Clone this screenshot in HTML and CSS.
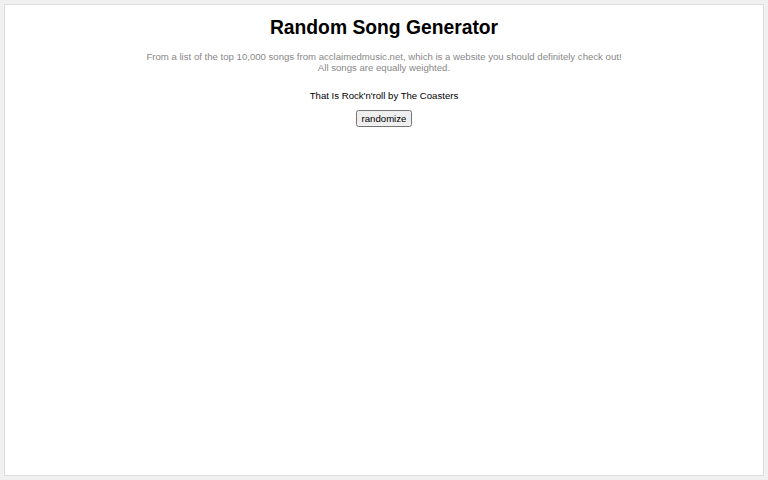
FILE: index.html
```html
<!DOCTYPE html>
<html lang="en">
<head>
    <meta charset="UTF-8">
    <meta name="viewport" content="width=device-width, initial-scale=1.0">
    <title>Random Song Generator</title>
    <link rel="stylesheet" href="styles.css">
</head>
<body>
    <main class="page">
        <h1>Random Song Generator</h1>
        <p class="intro">
            From a list of the top 10,000 songs from acclaimedmusic.net, which is a website you should definitely check out!<br>
            All songs are equally weighted.
        </p>
        <p id="song" class="song">That Is Rock'n'roll by The Coasters</p>
        <button id="randomize" type="button">randomize</button>
    </main>
</body>
</html>
```

FILE: styles.css
```css
html, body {
    height: 100%;
}
body {
    font-family: 'Liberation Sans', Arial, sans-serif;
    background-color: #f0f0f0;
    margin: 0;
    padding: 4px;
    box-sizing: border-box;
    color: #000;
}
.page {
    background-color: #fff;
    border: 1px solid #dcdcdc;
    height: 100%;
    box-sizing: border-box;
    text-align: center;
    padding-top: 12px;
}
h1 {
    font-size: 19.3px;
    line-height: 22px;
    margin: 0 0 12px;
}
.intro {
    font-size: 9.6px;
    line-height: 11px;
    color: #888;
    margin: 0 0 17px;
}
.song {
    font-size: 9.6px;
    line-height: 11px;
    margin: 0 0 7px;
}
button {
    font-family: 'Liberation Sans', Arial, sans-serif;
    font-size: 9.6px;
    padding: 1px 4px;
}
```
